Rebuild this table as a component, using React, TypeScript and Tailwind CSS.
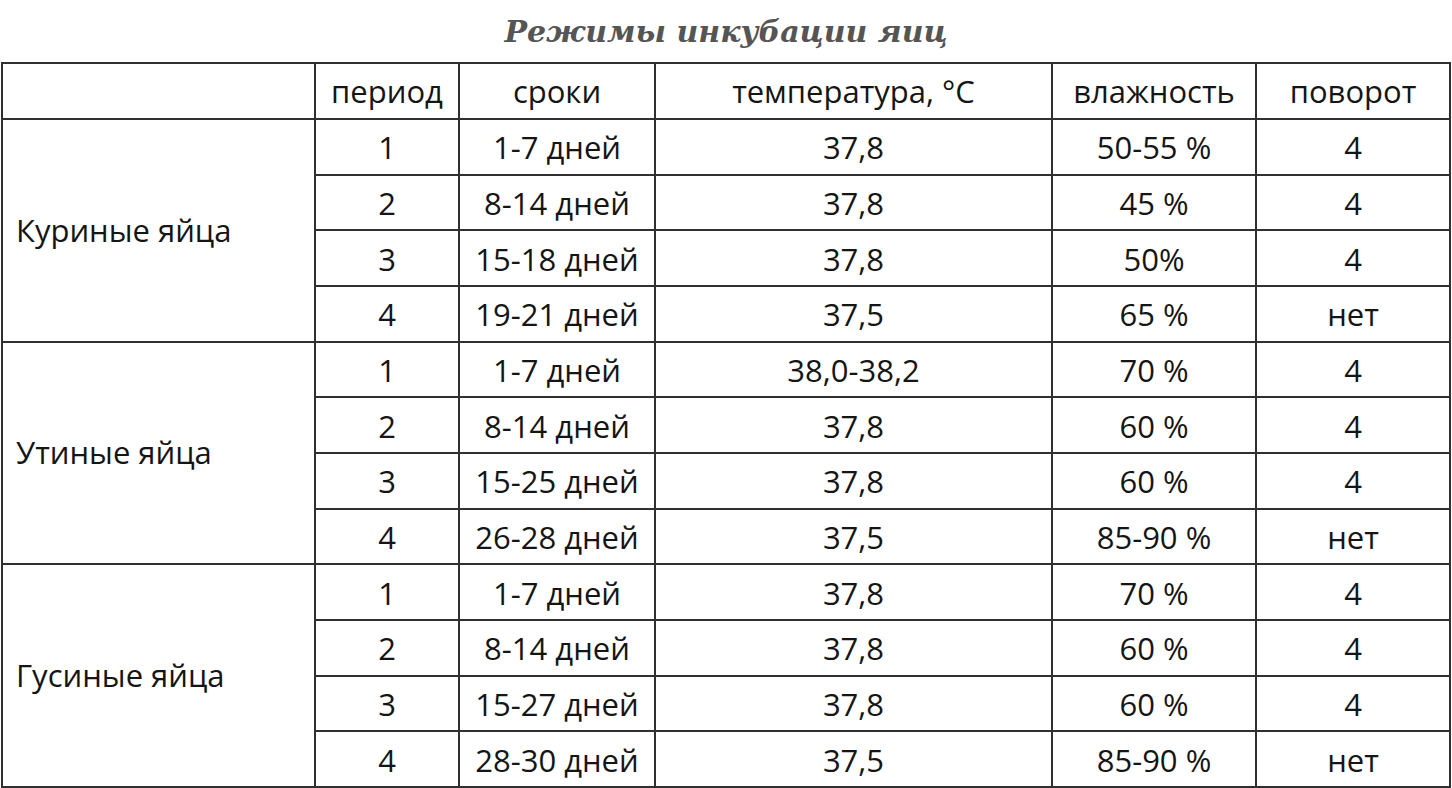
import React from "react";

type Row = { period: string; term: string; temp: string; humidity: string; turn: string };

interface Group {
  name: string;
  rows: Row[];
}

const groups: Group[] = [
  {
    name: "Куриные яйца",
    rows: [
      { period: "1", term: "1-7 дней", temp: "37,8", humidity: "50-55 %", turn: "4" },
      { period: "2", term: "8-14 дней", temp: "37,8", humidity: "45 %", turn: "4" },
      { period: "3", term: "15-18 дней", temp: "37,8", humidity: "50%", turn: "4" },
      { period: "4", term: "19-21 дней", temp: "37,5", humidity: "65 %", turn: "нет" },
    ],
  },
  {
    name: "Утиные яйца",
    rows: [
      { period: "1", term: "1-7 дней", temp: "38,0-38,2", humidity: "70 %", turn: "4" },
      { period: "2", term: "8-14 дней", temp: "37,8", humidity: "60 %", turn: "4" },
      { period: "3", term: "15-25 дней", temp: "37,8", humidity: "60 %", turn: "4" },
      { period: "4", term: "26-28 дней", temp: "37,5", humidity: "85-90 %", turn: "нет" },
    ],
  },
  {
    name: "Гусиные яйца",
    rows: [
      { period: "1", term: "1-7 дней", temp: "37,8", humidity: "70 %", turn: "4" },
      { period: "2", term: "8-14 дней", temp: "37,8", humidity: "60 %", turn: "4" },
      { period: "3", term: "15-27 дней", temp: "37,8", humidity: "60 %", turn: "4" },
      { period: "4", term: "28-30 дней", temp: "37,5", humidity: "85-90 %", turn: "нет" },
    ],
  },
];

const cell = "border-2 border-[#303030] p-0 pt-[2px] text-center align-middle leading-none";
const head = "border-2 border-[#303030] p-0 text-center align-middle leading-none font-normal";

export default function App() {
  return (
    <div className="w-[1452px] h-[788px] bg-white text-[#151515] font-['Open_Sans',sans-serif] text-[31px]">
      <div className="h-[62px] text-center leading-[63px] font-['DejaVu_Serif',serif] font-bold italic text-[30px] text-[#555555]">
        Режимы инкубации яиц
      </div>
      <table className="table-fixed border-collapse w-[1450px] ml-px">
        <colgroup>
          <col className="w-[313px]" />
          <col className="w-[144px]" />
          <col className="w-[196px]" />
          <col className="w-[397px]" />
          <col className="w-[204px]" />
          <col className="w-[194px]" />
        </colgroup>
        <thead>
          <tr className="h-[56px]">
            <th className={head}></th>
            <th className={head}>период</th>
            <th className={head}>сроки</th>
            <th className={head}>температура, °C</th>
            <th className={head}>влажность</th>
            <th className={head}>поворот</th>
          </tr>
        </thead>
        <tbody>
          {groups.map((g) =>
            g.rows.map((r, i) => (
              <tr key={g.name + i} className="h-[55.67px]">
                {i === 0 && (
                  <td
                    rowSpan={4}
                    className="border-2 border-[#303030] p-0 pl-[13px] text-left align-middle leading-none"
                  >
                    {g.name}
                  </td>
                )}
                <td className={cell}>{r.period}</td>
                <td className={cell}>{r.term}</td>
                <td className={cell}>{r.temp}</td>
                <td className={cell}>{r.humidity}</td>
                <td className={cell}>{r.turn}</td>
              </tr>
            ))
          )}
        </tbody>
      </table>
    </div>
  );
}
